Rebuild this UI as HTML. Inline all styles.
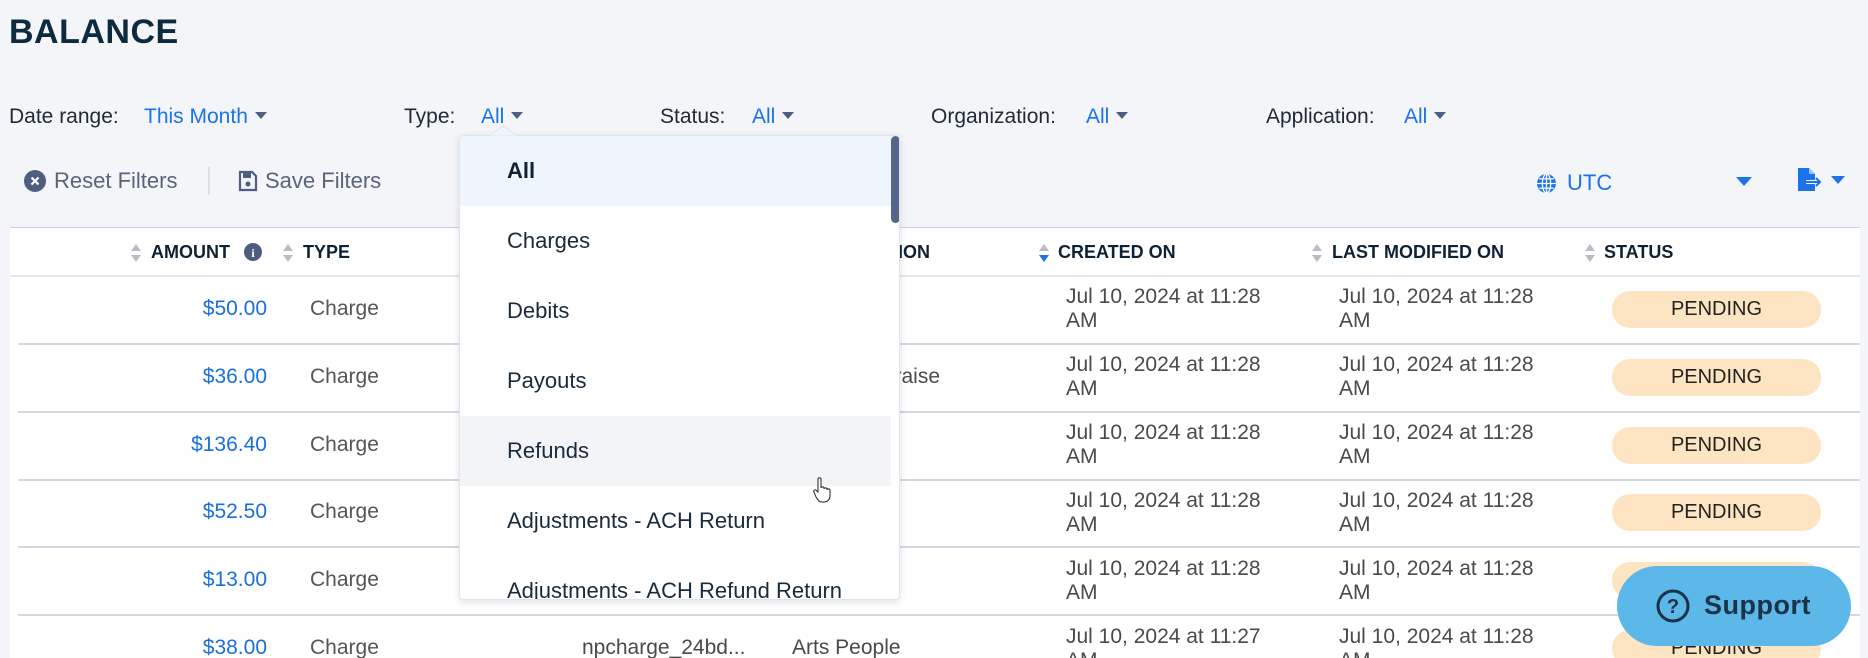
<!DOCTYPE html>
<html><head><meta charset="utf-8"><style>
*{margin:0;padding:0;box-sizing:border-box}
html,body{width:1868px;height:658px;overflow:hidden}
body{background:#f4f5f9;font-family:"Liberation Sans",sans-serif;position:relative;color:#1a2a3a}
.a{position:absolute;white-space:nowrap}
.f{font-size:21px;color:#1f2a36;top:105px}
.b{font-size:21px;color:#1a73e8;top:105px}
.b i{display:inline-block;width:0;height:0;border-left:6px solid transparent;border-right:6px solid transparent;border-top:7px solid #4e5d80;margin-left:7px;vertical-align:4px}
.card{position:absolute;left:10px;top:227px;width:1850px;height:460px;background:#fff;border-top:1px solid #c9cfdc}
.hl{position:absolute;left:18px;width:1842px;height:2px;background:#d3d8e3}
.h{font-size:18px;font-weight:bold;color:#0f2233;top:242px}
.amt{font-size:21px;color:#1a6fd8;right:1601px;text-align:right}
.ty{font-size:21px;color:#555;left:310px}
.dt{font-size:21px;color:#4a4a4a;line-height:24px}
.pill{position:absolute;left:1612px;width:209px;height:37px;border-radius:18px;background:#fde5c3;font-size:20px;color:#222;text-align:center;line-height:37px}
.dd{position:absolute;left:459px;top:135px;width:441px;height:465px;background:#fff;border:1px solid #e1e4ea;border-radius:4px;box-shadow:0 2px 8px rgba(0,0,0,.12);overflow:hidden}
.it{position:absolute;left:0;width:431px;height:70px;font-size:22px;color:#1a2a3a;padding-left:47px;line-height:70px}
</style></head><body>
<div class="a" style="left:9px;top:13px;font-size:34px;font-weight:bold;color:#0d2b3e;letter-spacing:0.5px">BALANCE</div>

<div class="a f" style="left:9px">Date range:</div><div class="a b" style="left:144px">This Month<i></i></div>
<div class="a f" style="left:404px">Type:</div><div class="a b" style="left:481px">All<i></i></div>
<div class="a f" style="left:660px">Status:</div><div class="a b" style="left:752px">All<i></i></div>
<div class="a f" style="left:931px">Organization:</div><div class="a b" style="left:1086px">All<i></i></div>
<div class="a f" style="left:1266px">Application:</div><div class="a b" style="left:1404px">All<i></i></div>

<svg class="a" style="left:24px;top:170px" width="22" height="22" viewBox="0 0 22 22"><circle cx="11" cy="11" r="11" fill="#4e5d80"/><path d="M7.5 7.5l7 7M14.5 7.5l-7 7" stroke="#fff" stroke-width="2.2"/></svg>
<div class="a" style="left:54px;top:168px;font-size:22px;color:#5a6478">Reset Filters</div>
<div class="a" style="left:208px;top:167px;width:2px;height:28px;background:#dde0e7"></div>
<svg class="a" style="left:238px;top:170px" width="20" height="22" viewBox="0 0 20 22"><path d="M2 2h12l4 4v14H2z" fill="none" stroke="#4e5d80" stroke-width="2.2"/><rect x="5" y="3" width="8" height="5" fill="#4e5d80"/><circle cx="10" cy="14" r="2.5" fill="#4e5d80"/></svg>
<div class="a" style="left:265px;top:168px;font-size:22px;color:#5a6478">Save Filters</div>

<svg class="a" style="left:1536px;top:173px" width="21" height="21" viewBox="0 0 20 20"><circle cx="10" cy="10" r="9" fill="#1a73e8"/><path d="M1 10h18M10 1v18M3 5.5h14M3 14.5h14" stroke="#f4f5f9" stroke-width="1.3"/><ellipse cx="10" cy="10" rx="4" ry="9" fill="none" stroke="#f4f5f9" stroke-width="1.3"/></svg>
<div class="a" style="left:1567px;top:170px;font-size:22px;color:#1a73e8">UTC</div>
<div class="a" style="left:1736px;top:177px;width:0;height:0;border-left:8px solid transparent;border-right:8px solid transparent;border-top:9px solid #1a73e8"></div>
<svg class="a" style="left:1796px;top:167px" width="30" height="26" viewBox="0 0 30 26"><path d="M2 1h11l6 6v17H2z" fill="#1a73e8"/><path d="M13 1v6h6" fill="#9cc3f5"/><path d="M10 15h14M20 11l4 4-4 4" stroke="#f4f5f9" stroke-width="4" fill="none"/><path d="M10 15h14M20 11l4 4-4 4" stroke="#1a73e8" stroke-width="2" fill="none"/></svg>
<div class="a" style="left:1831px;top:176px;width:0;height:0;border-left:7px solid transparent;border-right:7px solid transparent;border-top:8px solid #1a73e8"></div>

<div class="card"></div>
<div class="hl" style="top:275px;left:10px;width:1850px;background:#e4e7ee"></div>
<div class="hl" style="top:343px"></div><div class="hl" style="top:411px"></div><div class="hl" style="top:479px"></div><div class="hl" style="top:546px"></div><div class="hl" style="top:614px"></div>

<svg class="a" style="left:130px;top:243px" width="12" height="20" viewBox="0 0 12 20"><path d="M6 1l5 7H1zM6 19l5-7H1z" fill="#b8bcc6"/></svg>
<div class="a h" style="left:151px">AMOUNT</div>
<svg class="a" style="left:244px;top:243px" width="18" height="18"><circle cx="9" cy="9" r="9" fill="#4e5d80"/><text x="9" y="14" font-size="12" font-weight="bold" fill="#fff" text-anchor="middle" font-family="Liberation Serif">i</text></svg>
<svg class="a" style="left:282px;top:243px" width="12" height="20" viewBox="0 0 12 20"><path d="M6 1l5 7H1zM6 19l5-7H1z" fill="#b8bcc6"/></svg>
<div class="a h" style="left:303px">TYPE</div>
<div class="a h" style="right:938px">ORGANIZATION</div>
<svg class="a" style="left:1038px;top:243px" width="12" height="20" viewBox="0 0 12 20"><path d="M6 1l5 7H1z" fill="#b8bcc6"/><path d="M6 19l5-7H1z" fill="#1a73e8"/></svg>
<div class="a h" style="left:1058px">CREATED ON</div>
<svg class="a" style="left:1311px;top:243px" width="12" height="20" viewBox="0 0 12 20"><path d="M6 1l5 7H1zM6 19l5-7H1z" fill="#b8bcc6"/></svg>
<div class="a h" style="left:1332px">LAST MODIFIED ON</div>
<svg class="a" style="left:1584px;top:243px" width="12" height="20" viewBox="0 0 12 20"><path d="M6 1l5 7H1zM6 19l5-7H1z" fill="#b8bcc6"/></svg>
<div class="a h" style="left:1604px">STATUS</div>

<div class="a amt" style="top:297px">$50.00</div><div class="a ty" style="top:297px">Charge</div>
<div class="a dt" style="left:1066px;top:285px">Jul 10, 2024 at 11:28<br>AM</div><div class="a dt" style="left:1339px;top:285px">Jul 10, 2024 at 11:28<br>AM</div><div class="pill" style="top:291px">PENDING</div>

<div class="a amt" style="top:365px">$36.00</div><div class="a ty" style="top:365px">Charge</div>
<div class="a" style="right:928px;top:365px;font-size:21px;color:#4a4a4a">Sample Fundraise</div>
<div class="a dt" style="left:1066px;top:353px">Jul 10, 2024 at 11:28<br>AM</div><div class="a dt" style="left:1339px;top:353px">Jul 10, 2024 at 11:28<br>AM</div><div class="pill" style="top:359px">PENDING</div>

<div class="a amt" style="top:433px">$136.40</div><div class="a ty" style="top:433px">Charge</div>
<div class="a dt" style="left:1066px;top:421px">Jul 10, 2024 at 11:28<br>AM</div><div class="a dt" style="left:1339px;top:421px">Jul 10, 2024 at 11:28<br>AM</div><div class="pill" style="top:427px">PENDING</div>

<div class="a amt" style="top:500px">$52.50</div><div class="a ty" style="top:500px">Charge</div>
<div class="a dt" style="left:1066px;top:489px">Jul 10, 2024 at 11:28<br>AM</div><div class="a dt" style="left:1339px;top:489px">Jul 10, 2024 at 11:28<br>AM</div><div class="pill" style="top:494px">PENDING</div>

<div class="a amt" style="top:568px">$13.00</div><div class="a ty" style="top:568px">Charge</div>
<div class="a dt" style="left:1066px;top:557px">Jul 10, 2024 at 11:28<br>AM</div><div class="a dt" style="left:1339px;top:557px">Jul 10, 2024 at 11:28<br>AM</div><div class="pill" style="top:562px">PENDING</div>

<div class="a amt" style="top:636px">$38.00</div><div class="a ty" style="top:636px">Charge</div>
<div class="a" style="left:582px;top:636px;font-size:21px;color:#4a4a4a">npcharge_24bd...</div>
<div class="a" style="left:792px;top:636px;font-size:21px;color:#4a4a4a">Arts People</div>
<div class="a dt" style="left:1066px;top:625px">Jul 10, 2024 at 11:27<br>AM</div><div class="a dt" style="left:1339px;top:625px">Jul 10, 2024 at 11:28<br>AM</div><div class="pill" style="top:630px">PENDING</div>

<svg class="a" style="left:488px;top:126px;z-index:3" width="30" height="11"><path d="M0 10L15 0l15 10z" fill="#eef5fd" stroke="#e1e4ea"/><rect x="0" y="10" width="30" height="2" fill="#eef5fd"/></svg>
<div class="dd">
<div class="it" style="top:0;background:#eef5fd;font-weight:bold;color:#0f2233">All</div>
<div class="it" style="top:70px">Charges</div>
<div class="it" style="top:140px">Debits</div>
<div class="it" style="top:210px">Payouts</div>
<div class="it" style="top:280px;background:#f3f4f8">Refunds</div>
<div class="it" style="top:350px">Adjustments - ACH Return</div>
<div class="it" style="top:420px">Adjustments - ACH Refund Return</div>
<div style="position:absolute;left:431px;top:0;width:9px;height:87px;border-radius:5px;background:#56668a"></div>
</div>
<svg class="a" style="left:813px;top:477px" width="18" height="26" viewBox="0 0 18 26"><path d="M5 2c0-1.5 3-1.5 3 0v9c0-1.5 3-1.5 3 0v1c0-1.5 3-1.5 3 0v1c0-1.5 3-1.5 3 0v6c0 3-2 6-6 6H9c-3 0-4-2-6-5L1 15c-1-1.5 1-3 2.5-1.5L5 15z" fill="#fff" stroke="#222" stroke-width="1"/></svg>

<div class="a" style="left:1617px;top:566px;width:234px;height:80px;border-radius:40px;background:#5bb8e8"></div>
<svg class="a" style="left:1656px;top:589px" width="34" height="34" viewBox="0 0 34 34"><circle cx="17" cy="17" r="15" fill="none" stroke="#1c3246" stroke-width="3"/><text x="17" y="24" font-size="20" font-weight="bold" fill="#1c3246" text-anchor="middle" font-family="Liberation Sans">?</text></svg>
<div class="a" style="left:1704px;top:590px;font-size:27px;font-weight:bold;color:#1c3246;letter-spacing:0.5px">Support</div>
</body></html>
